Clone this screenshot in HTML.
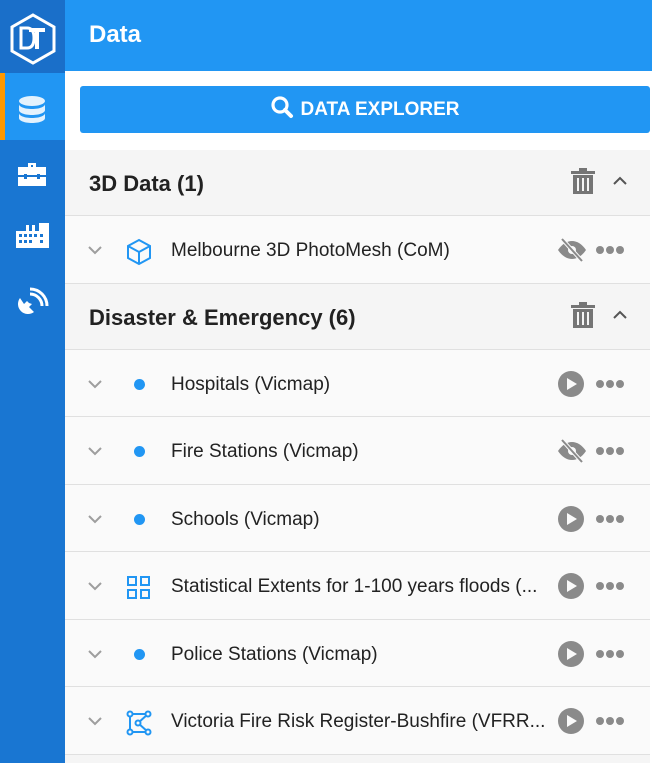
<!DOCTYPE html>
<html><head><style>
*{margin:0;padding:0;box-sizing:border-box}
body{width:652px;height:763px;overflow:hidden;font-family:"Liberation Sans",sans-serif;background:#f5f5f5;position:relative}
.side{position:absolute;left:0;top:0;width:65px;height:763px;background:#1976d2}
.logo{position:absolute;left:0;top:0;width:65px;height:73px;background:#1a6fc9}
.act{position:absolute;left:0;top:73px;width:65px;height:67px;background:#2196f3;border-left:5px solid #ff9800}
.hdr{position:absolute;left:65px;top:0;width:587px;height:71px;background:#2196f3;color:#fff;font-size:24px;font-weight:bold;padding:21px 0 0 24px}
.wbar{position:absolute;left:65px;top:71px;width:587px;height:79px;background:#fff}
.btn{position:absolute;left:80px;top:86px;width:570px;height:47px;background:#2196f3;border-radius:3px;color:#fff;font-weight:bold;font-size:19px;text-align:center;line-height:47px}
.list{position:absolute;left:65px;top:150px;width:585px}
.g{height:66px;background:#f5f5f5;border-bottom:1px solid #e0e0e0;position:relative;font-size:22px;font-weight:bold;color:#222;padding:21px 0 0 24px}
.r{height:67.5px;background:#fafafa;border-bottom:1px solid #e0e0e0;position:relative;font-size:19px;color:#222}
.r .t{position:absolute;left:106px;top:24px;white-space:nowrap}
.chev{position:absolute;left:22px;top:29px}
.ic{position:absolute;left:60px;top:22px}
.dot{position:absolute;left:69px;top:29px;width:11px;height:11px;border-radius:50%;background:#2196f3}
.act2{position:absolute;right:24px;top:21px}
.vl{position:absolute;left:650px;top:150px;width:2px;height:613px;background:#fff}
</style></head><body>
<div class="side"></div>
<div class="logo"><svg width="65" height="73" viewBox="0 0 65 73"><polygon points="33,15 54,27 54,51 33,63 12,51 12,27" fill="none" stroke="#fff" stroke-width="3"/><path d="M21 28h6c5 0 7 4 7 10s-2 10-7 10h-6z" fill="none" stroke="#fff" stroke-width="3"/><path d="M29 28h16v4h-6v17h-4v-17h-6z" fill="#fff"/></svg></div>
<div class="act"><svg width="60" height="67" viewBox="0 0 60 67"><ellipse cx="27" cy="28" rx="13" ry="5" fill="#e3f2fd"/><path d="M14 31c0 3 6 5 13 5s13-2 13-5v6c0 3-6 5-13 5s-13-2-13-5z" fill="#e3f2fd"/><path d="M14 40c0 3 6 5 13 5s13-2 13-5v5c0 3-6 5-13 5s-13-2-13-5z" fill="#e3f2fd"/></svg></div>
<svg style="position:absolute;left:0;top:140px" width="65" height="200" viewBox="0 0 65 200">
<path d="M28 23h8v4h10v8H18v-8h10zM31 25v2h2v-2z" fill="#fff"/><path d="M18 37h28v9H18z" fill="#fff"/><rect x="24" y="34" width="3" height="5" fill="#1976d2"/><rect x="37" y="34" width="3" height="5" fill="#1976d2"/>
<path d="M16 91h10v-6h3v6h3v-6h3v6h4v-8h10v25H16z" fill="#fff"/>
<g fill="#1976d2"><rect x="19" y="94" width="3" height="3"/><rect x="24" y="94" width="3" height="3"/><rect x="29" y="94" width="3" height="3"/><rect x="34" y="94" width="3" height="3"/><rect x="19" y="100" width="3" height="3"/><rect x="24" y="100" width="3" height="3"/><rect x="29" y="100" width="3" height="3"/><rect x="40" y="94" width="3" height="3"/><rect x="40" y="100" width="3" height="3"/></g>
<path d="M20 158a10 10 0 0 0 14 14l-5-5 3-3-3-1-2-2-3 3z" fill="#fff"/><path d="M30 154a12 12 0 0 1 12 12M30 149a17 17 0 0 1 17 17" fill="none" stroke="#fff" stroke-width="3"/>
</svg>
<div class="hdr">Data</div>
<div class="wbar"></div>
<div class="btn"><svg width="24" height="24" viewBox="0 0 24 24" style="vertical-align:-4px;margin-right:6px"><circle cx="10" cy="10" r="7" fill="none" stroke="#fff" stroke-width="3.2"/><path d="M15 15l6 6" stroke="#fff" stroke-width="4" stroke-linecap="round"/></svg>DATA EXPLORER</div>
<div class="list">
<div class="g">3D Data (1)<svg style="position:absolute;right:54px;top:18px" width="26" height="28" viewBox="0 0 26 28"><rect x="1" y="3" width="24" height="3" fill="#757575"/><rect x="9" y="0" width="8" height="4" fill="#757575"/><path d="M3 7h20v19H3z" fill="#757575"/><path d="M8 10v13M13 10v13M18 10v13" stroke="#f5f5f5" stroke-width="2"/></svg><svg style="position:absolute;right:22px;top:26px" width="16" height="10"><path d="M2 8l6-6 6 6" fill="none" stroke="#555" stroke-width="2"/></svg></div>
<div class="r"><svg class="chev" width="16" height="10"><path d="M2 2l6 6 6-6" fill="none" stroke="#9e9e9e" stroke-width="2"/></svg><svg class="ic" width="28" height="28" viewBox="0 0 28 28"><path d="M14 2l11 6v12l-11 6-11-6V8zM3 8l11 6 11-6M14 14v12" fill="none" stroke="#2196f3" stroke-width="2"/></svg><span class="t">Melbourne 3D PhotoMesh (CoM)</span>
<svg class="act2" width="70" height="26" viewBox="0 0 70 26"><path d="M2 13c4-6 9-9 14-9s10 3 14 9c-4 6-9 9-14 9S6 19 2 13z" fill="#8a8a8a"/><circle cx="16" cy="13" r="4" fill="#fafafa"/><path d="M6 2l20 22" stroke="#fafafa" stroke-width="4"/><path d="M6 2l20 22" stroke="#8a8a8a" stroke-width="2"/><circle cx="44" cy="13" r="4" fill="#8a8a8a"/><circle cx="54" cy="13" r="4" fill="#8a8a8a"/><circle cx="64" cy="13" r="4" fill="#8a8a8a"/></svg></div>
<div class="g">Disaster &amp; Emergency (6)<svg style="position:absolute;right:54px;top:18px" width="26" height="28" viewBox="0 0 26 28"><rect x="1" y="3" width="24" height="3" fill="#757575"/><rect x="9" y="0" width="8" height="4" fill="#757575"/><path d="M3 7h20v19H3z" fill="#757575"/><path d="M8 10v13M13 10v13M18 10v13" stroke="#f5f5f5" stroke-width="2"/></svg><svg style="position:absolute;right:22px;top:26px" width="16" height="10"><path d="M2 8l6-6 6 6" fill="none" stroke="#555" stroke-width="2"/></svg></div>
<div class="r"><svg class="chev" width="16" height="10"><path d="M2 2l6 6 6-6" fill="none" stroke="#9e9e9e" stroke-width="2"/></svg><div class="dot"></div><span class="t">Hospitals (Vicmap)</span><svg class="act2" width="70" height="26" viewBox="0 0 70 26"><circle cx="15" cy="13" r="13" fill="#8a8a8a"/><path d="M11 7l10 6-10 6z" fill="#fafafa"/><circle cx="44" cy="13" r="4" fill="#8a8a8a"/><circle cx="54" cy="13" r="4" fill="#8a8a8a"/><circle cx="64" cy="13" r="4" fill="#8a8a8a"/></svg></div>
<div class="r"><svg class="chev" width="16" height="10"><path d="M2 2l6 6 6-6" fill="none" stroke="#9e9e9e" stroke-width="2"/></svg><div class="dot"></div><span class="t">Fire Stations (Vicmap)</span><svg class="act2" width="70" height="26" viewBox="0 0 70 26"><path d="M2 13c4-6 9-9 14-9s10 3 14 9c-4 6-9 9-14 9S6 19 2 13z" fill="#8a8a8a"/><circle cx="16" cy="13" r="4" fill="#fafafa"/><path d="M6 2l20 22" stroke="#fafafa" stroke-width="4"/><path d="M6 2l20 22" stroke="#8a8a8a" stroke-width="2"/><circle cx="44" cy="13" r="4" fill="#8a8a8a"/><circle cx="54" cy="13" r="4" fill="#8a8a8a"/><circle cx="64" cy="13" r="4" fill="#8a8a8a"/></svg></div>
<div class="r"><svg class="chev" width="16" height="10"><path d="M2 2l6 6 6-6" fill="none" stroke="#9e9e9e" stroke-width="2"/></svg><div class="dot"></div><span class="t">Schools (Vicmap)</span><svg class="act2" width="70" height="26" viewBox="0 0 70 26"><circle cx="15" cy="13" r="13" fill="#8a8a8a"/><path d="M11 7l10 6-10 6z" fill="#fafafa"/><circle cx="44" cy="13" r="4" fill="#8a8a8a"/><circle cx="54" cy="13" r="4" fill="#8a8a8a"/><circle cx="64" cy="13" r="4" fill="#8a8a8a"/></svg></div>
<div class="r"><svg class="chev" width="16" height="10"><path d="M2 2l6 6 6-6" fill="none" stroke="#9e9e9e" stroke-width="2"/></svg><svg class="ic" width="28" height="28" viewBox="0 0 28 28"><g fill="none" stroke="#2196f3" stroke-width="2"><rect x="3" y="3" width="8" height="8"/><rect x="16" y="3" width="8" height="8"/><rect x="3" y="16" width="8" height="8"/><rect x="16" y="16" width="8" height="8"/></g></svg><span class="t">Statistical Extents for 1-100 years floods (...</span><svg class="act2" width="70" height="26" viewBox="0 0 70 26"><circle cx="15" cy="13" r="13" fill="#8a8a8a"/><path d="M11 7l10 6-10 6z" fill="#fafafa"/><circle cx="44" cy="13" r="4" fill="#8a8a8a"/><circle cx="54" cy="13" r="4" fill="#8a8a8a"/><circle cx="64" cy="13" r="4" fill="#8a8a8a"/></svg></div>
<div class="r"><svg class="chev" width="16" height="10"><path d="M2 2l6 6 6-6" fill="none" stroke="#9e9e9e" stroke-width="2"/></svg><div class="dot"></div><span class="t">Police Stations (Vicmap)</span><svg class="act2" width="70" height="26" viewBox="0 0 70 26"><circle cx="15" cy="13" r="13" fill="#8a8a8a"/><path d="M11 7l10 6-10 6z" fill="#fafafa"/><circle cx="44" cy="13" r="4" fill="#8a8a8a"/><circle cx="54" cy="13" r="4" fill="#8a8a8a"/><circle cx="64" cy="13" r="4" fill="#8a8a8a"/></svg></div>
<div class="r"><svg class="chev" width="16" height="10"><path d="M2 2l6 6 6-6" fill="none" stroke="#9e9e9e" stroke-width="2"/></svg><svg class="ic" width="28" height="28" viewBox="0 0 28 28"><g fill="none" stroke="#2196f3" stroke-width="2"><path d="M5 5h18M5 5v18h18M23 5l-10 9 10 9"/><circle cx="5" cy="5" r="2.5" fill="#fafafa"/><circle cx="23" cy="5" r="2.5" fill="#fafafa"/><circle cx="5" cy="23" r="2.5" fill="#fafafa"/><circle cx="23" cy="23" r="2.5" fill="#fafafa"/><circle cx="13" cy="14" r="2.5" fill="#fafafa"/></g></svg><span class="t">Victoria Fire Risk Register-Bushfire (VFRR...</span><svg class="act2" width="70" height="26" viewBox="0 0 70 26"><circle cx="15" cy="13" r="13" fill="#8a8a8a"/><path d="M11 7l10 6-10 6z" fill="#fafafa"/><circle cx="44" cy="13" r="4" fill="#8a8a8a"/><circle cx="54" cy="13" r="4" fill="#8a8a8a"/><circle cx="64" cy="13" r="4" fill="#8a8a8a"/></svg></div>
</div>
<div class="vl"></div>
</body></html>
